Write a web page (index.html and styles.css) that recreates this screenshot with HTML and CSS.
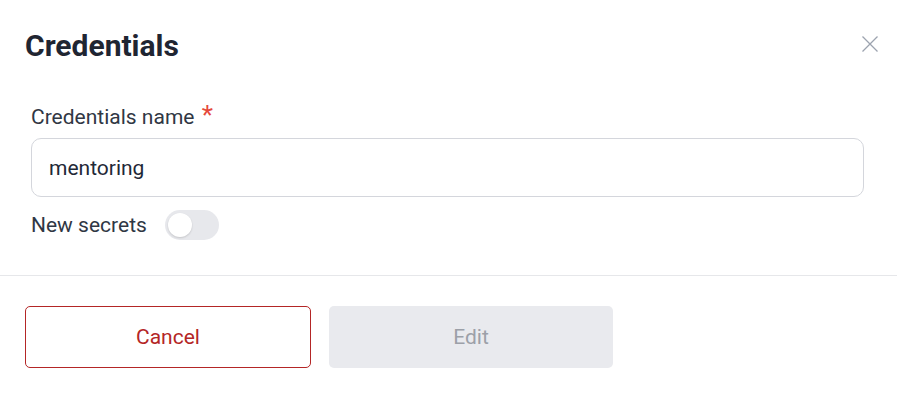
FILE: index.html
```html
<!DOCTYPE html>
<html>
<head>
<meta charset="utf-8">
<link rel="stylesheet" href="styles.css">
</head>
<body>
<div class="modal">
  <div class="header">
    <h1 class="title">Credentials</h1>
    <button class="close" aria-label="Close">
      <svg width="16" height="16" viewBox="0 0 16 16"><path d="M0.5 0.5L15.5 15.5M15.5 0.5L0.5 15.5" stroke="#9ca3af" stroke-width="1.3" fill="none"/></svg>
    </button>
  </div>
  <div class="body">
    <label class="label">Credentials name <span class="req">*</span></label>
    <div class="input">mentoring</div>
    <div class="toggle-row">
      <span class="toggle-label">New secrets</span>
      <span class="toggle"><span class="knob"></span></span>
    </div>
  </div>
  <div class="footer">
    <button class="btn btn-cancel">Cancel</button>
    <button class="btn btn-edit">Edit</button>
  </div>
</div>
</body>
</html>
```
FILE: styles.css
```css
* { box-sizing: border-box; }
html, body { margin: 0; padding: 0; background: #fff; }
body { font-family: Roboto, "Liberation Sans", sans-serif; color: #1f2937; }
.modal { width: 897px; }
.header { display: flex; justify-content: space-between; align-items: flex-start; padding: 28px 19px 0 25px; }
.title { margin: 0; font-size: 30px; font-weight: 700; color: #1f2532; line-height: 36px; }
.close { background: none; border: 0; padding: 0; width: 16px; height: 16px; display: flex; margin-top: 8px; }
.body { padding: 41px 33px 0 31px; }
.label { display: block; font-size: 21px; color: #303744; line-height: 24px; }
.req { color: #e5483b; font-size: 26px; vertical-align: top; line-height: 20px; margin-left: 2px; }
.input { margin-top: 9px; height: 59px; border: 1px solid #d4d6dc; border-radius: 10px; padding: 0 17px; display: flex; align-items: center; font-size: 21px; color: #1f2937; }
.toggle-row { display: flex; align-items: center; gap: 18px; margin-top: 13px; height: 30px; }
.toggle-label { font-size: 21px; color: #303744; }
.toggle { width: 54px; height: 30px; background: #e7e8ec; border-radius: 15px; padding: 3px; display: flex; }
.knob { width: 24px; height: 24px; border-radius: 50%; background: #fff; box-shadow: 0 1px 2px rgba(0,0,0,0.15); }
.footer { margin-top: 35px; border-top: 1px solid #e6e7ea; padding: 30px 0 0 25px; display: flex; gap: 18px; }
.btn { width: 286px; height: 62px; border-radius: 5px; font-family: Roboto, "Liberation Sans", sans-serif; font-size: 21px; }
.btn-cancel { background: #fff; border: 1px solid #b42626; color: #b42626; }
.btn-edit { width: 284px; background: #e9eaee; border: 0; color: #9ca0a8; }
```
